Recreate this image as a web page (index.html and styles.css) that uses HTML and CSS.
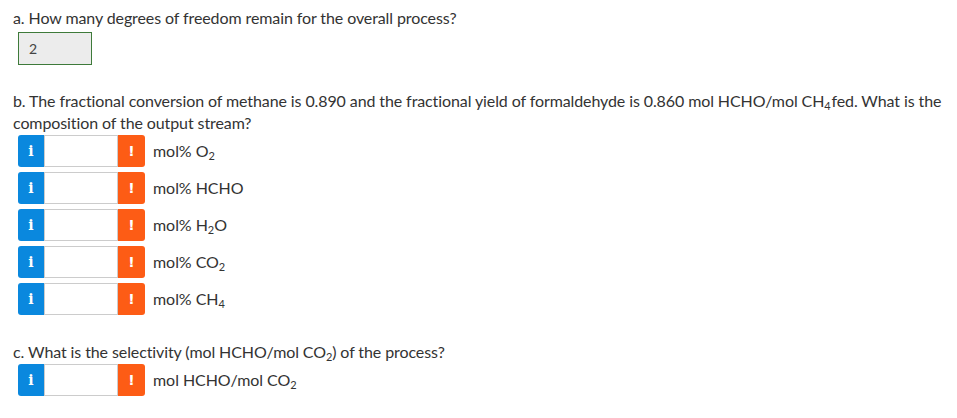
FILE: index.html
```html
<!DOCTYPE html>
<html>
<head>
<meta charset="utf-8">
<link rel="stylesheet" href="styles.css">
</head>
<body>
<div class="page">
  <p class="q q-a">a. How many degrees of freedom remain for the overall process?</p>
  <div class="answer">2</div>

  <p class="q q-b">b. The fractional conversion of methane is 0.890 and the fractional yield of formaldehyde is 0.860 mol HCHO/mol CH<sub>4</sub>&#8202;fed. What is the composition of the output stream?</p>
  <div class="rows">
    <div class="row">
      <div class="group"><span class="btn info">i</span><span class="field"></span><span class="btn warn">!</span></div>
      <span class="unit">mol% O<sub>2</sub></span>
    </div>
    <div class="row">
      <div class="group"><span class="btn info">i</span><span class="field"></span><span class="btn warn">!</span></div>
      <span class="unit">mol% HCHO</span>
    </div>
    <div class="row">
      <div class="group"><span class="btn info">i</span><span class="field"></span><span class="btn warn">!</span></div>
      <span class="unit">mol% H<sub>2</sub>O</span>
    </div>
    <div class="row">
      <div class="group"><span class="btn info">i</span><span class="field"></span><span class="btn warn">!</span></div>
      <span class="unit">mol% CO<sub>2</sub></span>
    </div>
    <div class="row">
      <div class="group"><span class="btn info">i</span><span class="field"></span><span class="btn warn">!</span></div>
      <span class="unit">mol% CH<sub>4</sub></span>
    </div>
  </div>

  <p class="q q-c">c. What is the selectivity (mol HCHO/mol CO<sub>2</sub>) of the process?</p>
  <div class="rows">
    <div class="row">
      <div class="group"><span class="btn info">i</span><span class="field"></span><span class="btn warn">!</span></div>
      <span class="unit">mol HCHO/mol CO<sub>2</sub></span>
    </div>
  </div>
</div>
</body>
</html>
```

FILE: styles.css
```css
html, body {
  margin: 0;
  padding: 0;
  background: #fff;
}
body {
  font-family: Lato, "Open Sans", sans-serif;
  font-size: 16px;
  line-height: 22px;
  color: #333;
}
.page {
  padding: 7px 0 0 13px;
}
.q {
  margin: 0;
  letter-spacing: -0.1px;
}
sub {
  font-size: 11px;
  line-height: 0;
  vertical-align: -3px;
}
.answer {
  margin: 3px 0 0 5px;
  width: 72px;
  height: 31px;
  border: 1px solid #3e7a3a;
  background: #ececec;
  box-sizing: content-box;
  font-size: 14px;
  line-height: 31px;
  text-indent: 10px;
  color: #444;
}
.q-b {
  margin-top: 25px;
}
.q-c {
  margin-top: 26px;
}
.rows {
  display: flex;
  flex-direction: column;
  gap: 5px;
  margin-left: 5px;
  margin-top: 1px;
}
.row {
  display: flex;
  align-items: center;
  gap: 8px;
}
.group {
  display: flex;
  height: 32px;
}
.btn {
  display: flex;
  align-items: center;
  justify-content: center;
  color: #fff;
  font-weight: bold;
}
.info {
  width: 26px;
  background: #0a88de;
  border-radius: 3px 0 0 3px;
  font-family: "DejaVu Serif", serif;
  font-size: 14px;
}
.warn {
  width: 27px;
  background: #fd5c15;
  border-radius: 0 3px 3px 0;
  font-family: "DejaVu Sans", sans-serif;
  font-size: 14px;
}
.field {
  width: 72px;
  border: 1px solid #ccc;
  background: #fff;
}
.unit {
  font-size: 16px;
  letter-spacing: -0.05px;
}
```
